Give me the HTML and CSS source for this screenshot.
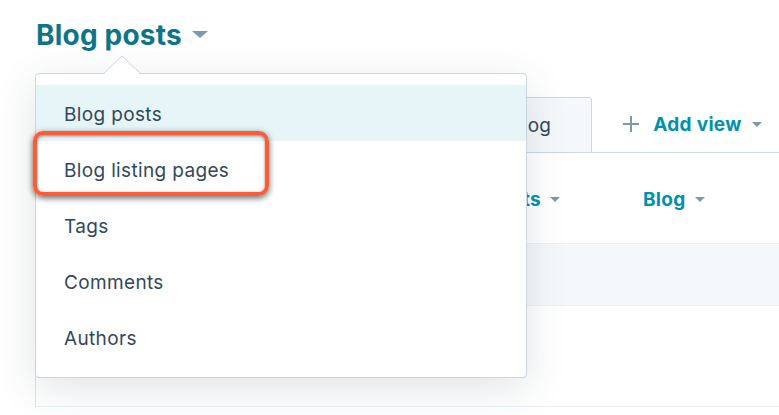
FILE: index.html
```html
<!DOCTYPE html>
<html lang="en">
<head>
<meta charset="utf-8">
<title>Blog posts</title>
<link rel="stylesheet" href="styles.css">
</head>
<body>
<header class="page-head">
  <h1 class="page-title">Blog posts
    <svg class="caret caret-lg" viewBox="0 0 16 7" aria-hidden="true"><polygon points="0,0 16,0 8,7"/></svg>
  </h1>
</header>

<div class="workspace">
  <div class="tabs">
    <div class="tab">Blog</div>
    <button class="add-view">
      <svg class="plus" viewBox="0 0 16 16" aria-hidden="true"><path d="M8 0v16M0 8h16"/></svg>
      <span>Add view</span>
      <svg class="caret" viewBox="0 0 10 5" aria-hidden="true"><polygon points="0,0 10,0 5,5"/></svg>
    </button>
  </div>
  <div class="filters">
    <div class="filter filter-first">All posts
      <svg class="caret" viewBox="0 0 10 5" aria-hidden="true"><polygon points="0,0 10,0 5,5"/></svg>
    </div>
    <div class="filter">Blog
      <svg class="caret" viewBox="0 0 10 5" aria-hidden="true"><polygon points="0,0 10,0 5,5"/></svg>
    </div>
  </div>
  <div class="table-head"></div>
  <div class="table-row"></div>
</div>

<div class="menu">
  <svg class="menu-pointer" viewBox="0 0 38 20" aria-hidden="true">
    <polygon points="0,20 19,1 38,20" fill="#fff"/>
    <polyline points="0,19 19,1 38,19" fill="none" stroke="#cbd6e2" stroke-width="1"/>
  </svg>
  <ul class="menu-list">
    <li class="menu-item is-active">Blog posts</li>
    <li class="menu-item">Blog listing pages</li>
    <li class="menu-item">Tags</li>
    <li class="menu-item">Comments</li>
    <li class="menu-item">Authors</li>
  </ul>
</div>
<div class="callout"></div>
</body>
</html>
```

FILE: styles.css
```css
* { box-sizing: border-box; }

html, body {
  margin: 0;
  padding: 0;
  background: #ffffff;
  font-family: "Inter", "Noto Sans", "Liberation Sans", sans-serif;
  color: #33475b;
  overflow: hidden;
}

body {
  width: 779px;
  height: 415px;
  position: relative;
}

.page-head {
  height: 96px;
  padding: 19px 0 0 36px;
}

.page-title {
  margin: 0;
  font-size: 28px;
  line-height: 32px;
  font-weight: 700;
  color: #0e7487;
  display: flex;
  align-items: center;
  gap: 10px;
  letter-spacing: 0.2px;
}

.caret {
  width: 10px;
  height: 5px;
  fill: #7c98b6;
  flex: none;
}

.caret-lg {
  width: 16px;
  height: 7px;
  margin-top: -2px;
}

.workspace {
  margin-left: 35px;
  border-left: 1px solid #dfe3eb;
}

.tabs {
  height: 57px;
  display: flex;
  align-items: flex-end;
  border-bottom: 1px solid #cbd6e2;
  padding-left: 433px;
}

.tab {
  height: 56px;
  margin-bottom: -1px;
  padding: 0 40px;
  display: flex;
  align-items: center;
  font-size: 19px;
  letter-spacing: 0.3px;
  background: #f5f8fa;
  border: 1px solid #cbd6e2;
  border-radius: 3px 3px 0 0;
}

.add-view {
  height: 56px;
  margin-left: 31px;
  padding: 0;
  border: 0;
  background: none;
  display: flex;
  align-items: center;
  font-family: inherit;
  font-size: 19px;
  font-weight: 700;
  letter-spacing: 0.3px;
  color: #0091ae;
}

.add-view .plus {
  width: 16px;
  height: 16px;
  stroke: #7c98b6;
  stroke-width: 2;
  margin-right: 14px;
}

.add-view .caret {
  margin-left: 10px;
}

.filters {
  height: 90px;
  display: flex;
  align-items: center;
  padding-top: 2px;
}

.filter {
  display: flex;
  align-items: center;
  gap: 9px;
  font-size: 19px;
  font-weight: 700;
  letter-spacing: 0.3px;
  color: #0091ae;
}

.filter-first {
  width: 524px;
  justify-content: flex-end;
  margin-right: 83px;
}

.table-head {
  height: 63px;
  background: #f5f8fa;
  border-top: 1px solid #eaf0f6;
  border-bottom: 1px solid #eaf0f6;
}

.table-row {
  height: 101px;
  border-bottom: 1px solid #eaf0f6;
}

.menu {
  position: absolute;
  left: 35px;
  top: 73px;
  width: 492px;
  height: 305px;
  background: #ffffff;
  border: 1px solid #cbd6e2;
  border-radius: 4px;
  box-shadow: 0 10px 40px rgba(45, 62, 80, 0.14);
}

.menu-pointer {
  position: absolute;
  left: 67px;
  top: -19px;
  width: 38px;
  height: 20px;
}

.menu-list {
  list-style: none;
  margin: 0;
  padding: 11px 0;
}

.menu-item {
  height: 56px;
  display: flex;
  align-items: center;
  padding: 2px 0 0 28px;
  font-size: 19px;
  letter-spacing: 0.35px;
  color: #33475b;
}

.menu-item.is-active {
  background: #e5f5f8;
}

.callout {
  position: absolute;
  left: 33px;
  top: 131px;
  width: 236px;
  height: 65px;
  border: 4px solid #ff5c35;
  border-radius: 10px;
  box-shadow: 0 2px 6px rgba(0, 0, 0, 0.6), inset 0 1px 3px rgba(0, 0, 0, 0.45);
}
```
